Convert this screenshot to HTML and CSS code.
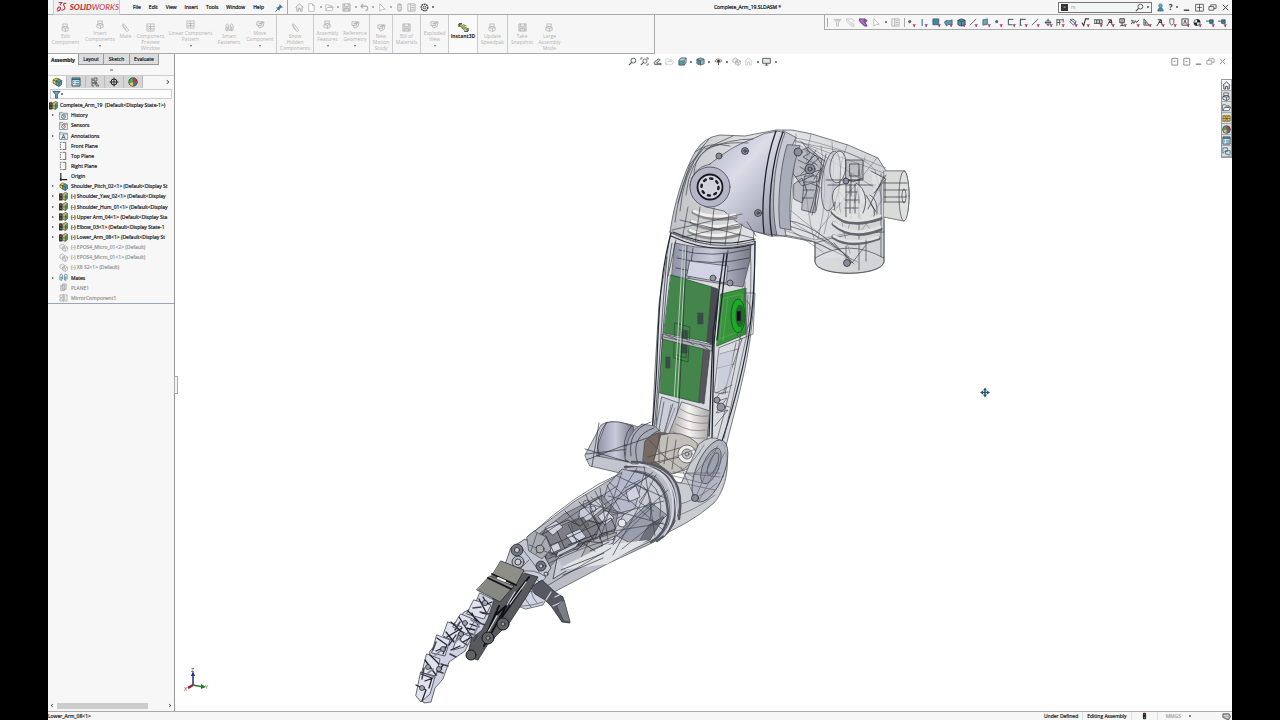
FILE: index.html
```html
<!DOCTYPE html>
<html lang="en">
<head>
<meta charset="utf-8">
<title>Complete_Arm_19.SLDASM</title>
<link rel="stylesheet" href="styles.css">
</head>
<body>
<svg class="defs" aria-hidden="true">
  <symbol id="part" viewBox="0 0 10 10"><path d="M1 3l3-2 3 1v4L4 8 1 6z" fill="#e0c73c" stroke="#665d22" stroke-width=".7"/><path d="M4 4l3-2 2.500 1.500v4L7 9.500 4 8z" fill="#58a0a8" stroke="#1e4a50" stroke-width=".7"/><path d="M4 4l3 1.500 2.500-2M7 5.500v4M1 3l3 1" fill="none" stroke="#333" stroke-width=".6"/></symbol>
  <symbol id="flex" viewBox="0 0 10 10"><rect x="0" y="1.500" width="4" height="8" rx="1" fill="#3a3030"/><circle cx="2" cy="3.500" r="1" fill="#a34b3a"/><circle cx="2" cy="7" r="1" fill="#567a3a"/><path d="M4 2.500l3-2 2.500 1v6L7 9.500 4 8z" fill="#d8c240" stroke="#27464c" stroke-width=".7"/><path d="M7 3l2.500-1.500v6L7 9.500z" fill="#4b949e"/><path d="M4 5.500h5.500M7 3v6" stroke="#27464c" stroke-width=".6"/></symbol>
  <symbol id="ghost" viewBox="0 0 10 10"><path d="M1 2.500l3-1.500 2 1.500v3L4 7 1 5.500zM4 4.500l3-1.500 2.500 1.500v3L7 9.500 4 8z" fill="#eee" stroke="#aaa" stroke-width=".8"/><path d="M4 4.500l3 1.500 2.500-1.500M7 6v3.500" fill="none" stroke="#aaa" stroke-width=".7"/></symbol>
  <symbol id="folder" viewBox="0 0 10 10"><path d="M.7 1.500h3l1 1h4.600v7H.7z" fill="#f8f8f8" stroke="#6a7880" stroke-width=".8"/><path d="M.7 3.500h8.600" stroke="#6a7880" stroke-width=".6"/></symbol>
  <symbol id="history" viewBox="0 0 10 10"><use href="#folder"/><circle cx="5" cy="6.200" r="2.200" fill="#cde" stroke="#35617d" stroke-width=".8"/><path d="M5 5v1.300h1.200" fill="none" stroke="#35617d" stroke-width=".7"/></symbol>
  <symbol id="sensor" viewBox="0 0 10 10"><use href="#folder"/><circle cx="5" cy="6.200" r="2" fill="none" stroke="#444" stroke-width=".8"/><path d="M5 6.200l2-2" stroke="#b33" stroke-width=".9"/></symbol>
  <symbol id="annot" viewBox="0 0 10 10"><use href="#folder"/><path d="M3 9l2-5 2 5M3.700 7.300h2.600" fill="none" stroke="#23567a" stroke-width=".9"/></symbol>
  <symbol id="plane" viewBox="0 0 10 10"><path d="M4 1.500h3.500v8H4" fill="none" stroke="#555" stroke-width=".9"/><path d="M3 1.500H1.500v8H4" fill="none" stroke="#555" stroke-width=".9" stroke-dasharray="2 1"/></symbol>
  <symbol id="origin" viewBox="0 0 10 10"><path d="M2 1v7.500h7" fill="none" stroke="#222" stroke-width="1.300"/><circle cx="2" cy="8.500" r="1.200" fill="#222"/></symbol>
  <symbol id="mates" viewBox="0 0 10 10"><path d="M1 8V3.500C1 .5 4 .5 4 3.500V7M6 8V3.500C6 .5 9 .5 9 3.500V7M2.500 4v5M7.500 4v5" fill="none" stroke="#5d8ea6" stroke-width="1.100"/></symbol>
  <symbol id="gmates" viewBox="0 0 10 10"><path d="M1 8V3.500C1 .5 4 .5 4 3.500V7M6 8V3.500C6 .5 9 .5 9 3.500V7M1 8h8M2.500 4v5M7.500 4v5" fill="none" stroke="currentColor" stroke-width="1"/></symbol>
  <symbol id="gplane" viewBox="0 0 10 10"><path d="M2 2.500h4v6H2zM4 1h4v6H4z" fill="#ddd" stroke="#999" stroke-width=".7"/></symbol>
  <symbol id="mirror" viewBox="0 0 10 10"><path d="M1 2h3v3H1zM1 6.500h3V9H1zM6 2h3v7H6zM5 1v9" fill="#eee" stroke="#aaa" stroke-width=".8"/></symbol>
  <symbol id="prop" viewBox="0 0 10 10"><path d="M1 1h8v8H1z" fill="#e8f2f6" stroke="#28434e" stroke-width=".9"/><path d="M1 2.300h8" stroke="#2c6984" stroke-width="1.800"/><path d="M2 4.700h1.500M2 6.500h1.500M4.500 4.700h4M4.500 6.500h4M4.500 8h4" stroke="#39839d" stroke-width=".9"/></symbol>
  <symbol id="config" viewBox="0 0 10 10"><path d="M2 1v8h2M2 3h2M2 6h2" fill="none" stroke="#444" stroke-width=".8"/><path d="M4 1h3v3H4zM4 5h2v2H4zM6 5l3 4H6z" fill="#ccc" stroke="#444" stroke-width=".7"/></symbol>
  <symbol id="target" viewBox="0 0 10 10"><circle cx="5" cy="5" r="3" fill="none" stroke="#222"/><path d="M5 .5v9M.5 5h9" stroke="#222" stroke-width=".9"/></symbol>
  <symbol id="ball" viewBox="0 0 10 10"><circle cx="5" cy="5" r="4.300" fill="#3b78b5"/><path d="M5 5V.7A4.300 4.300 0 0 0 .9 6z" fill="#4ca553"/><path d="M5 5V.7A4.300 4.300 0 0 1 9.200 6z" fill="#c6373b"/><path d="M5 5L1 6.500A4.300 4.300 0 0 0 5 9.300z" fill="#e5cf4a"/><circle cx="5" cy="5" r="4.300" fill="none" stroke="#333" stroke-width=".6"/></symbol>
  <symbol id="home" viewBox="0 0 10 10"><path d="M.7 5L5 1l4.300 4M2 4.500V9h2V6h2v3h2V4.500" fill="#edf3f5" stroke="currentColor" stroke-width="1"/></symbol>
  <symbol id="new" viewBox="0 0 10 10"><path d="M2 .8h4l2 2v6.500H2zM6 .8v2h2" fill="#fff" stroke="currentColor" stroke-width=".8"/></symbol>
  <symbol id="open" viewBox="0 0 10 10"><path d="M.8 8.500V2h3l1 1.200h3v1.500H3L.8 8.500h6.700l2-3.800H3" fill="#fff" stroke="currentColor" stroke-width=".8"/></symbol>
  <symbol id="save" viewBox="0 0 10 10"><path d="M1 1h8v8H1zM3 1v3h4V1M2.500 9V6h5v3" fill="#ddd" stroke="currentColor" stroke-width=".9"/></symbol>
  <symbol id="undo" viewBox="0 0 10 10"><path d="M3.500 1L1 3.500 3.500 6M1 3.500h5c4 0 3 5 0 5" fill="none" stroke="currentColor" stroke-width="1.200"/></symbol>
  <symbol id="cursor" viewBox="0 0 10 10"><path d="M2 1l6 6H5L2 9z" fill="#fff" stroke="currentColor" stroke-width=".8"/></symbol>
  <symbol id="light" viewBox="0 0 10 10"><rect x="3" y="1" width="4" height="8" rx="1.500" fill="currentColor"/><circle cx="5" cy="3" r="1" fill="#b33"/><circle cx="5" cy="7" r="1" fill="#5a5"/></symbol>
  <symbol id="glight" viewBox="0 0 10 10"><rect x="3" y="1" width="4" height="8" rx="1.500" fill="#ccc" stroke="#aaa"/><path d="M3 4h4M3 6.500h4" stroke="#eee"/></symbol>
  <symbol id="list" viewBox="0 0 10 10"><path d="M1 1h8v8H1zM4 1v8M5 3h3M5 5h3M5 7h3" fill="none" stroke="currentColor" stroke-width=".9"/></symbol>
  <symbol id="gear" viewBox="0 0 10 10"><circle cx="5" cy="5" r="3.700" fill="none" stroke="#444" stroke-width="1.500" stroke-dasharray="2 .7"/><circle cx="5" cy="5" r="1.500" fill="none" stroke="#444"/></symbol>
  <symbol id="asm" viewBox="0 0 10 10"><path d="M2 1h5v3H2zM1 5l4-1 3 1v3L5 9.500 1 8zM1 5l4 1 3-1M5 6v3.500" fill="#eee" stroke="currentColor" stroke-width=".8"/></symbol>
  <symbol id="clip" viewBox="0 0 10 10"><path d="M3 1c-2 0-2 2-1 3l4 5c2 1 3-1 2-2L4 2C3 1 2 3 3 4l3 4" fill="none" stroke="currentColor" stroke-width=".9"/></symbol>
  <symbol id="grid" viewBox="0 0 10 10"><path d="M1 1h8v8H1zM1 4h8M5 1v8M1 6.500h8M3 3l4 4M7 3L3 7" fill="none" stroke="currentColor" stroke-width=".8"/></symbol>
  <symbol id="move" viewBox="0 0 10 10"><path d="M1 2h5v4H1zM4 4l5-2-1 5-4 2-2-3M7 1v3H3" fill="#eee" stroke="currentColor" stroke-width=".9"/></symbol>
  <symbol id="i3d" viewBox="0 0 14 12"><path d="M1 3.500l2-1.500 9 5-1 2z" fill="#d9d54c" stroke="#28451e" stroke-width=".8"/><path d="M1 1h4M1 1v4M13 11H8M13 11V7" stroke="#222" stroke-width="1.500"/><path d="M4 6l5 4M6 2l5 2" stroke="#4c8a3b" stroke-width="1.300"/></symbol>
  <symbol id="funnel" viewBox="0 0 10 10"><path d="M1 1.500h8L6 5v4H4V5z" fill="#7ba8bd" stroke="currentColor" stroke-width=".9"/></symbol>
  <symbol id="gfunnel" viewBox="0 0 10 10"><path d="M1 1.500h8L6 5v4H4V5zM3 3h5" fill="#eee" stroke="#bbb" stroke-width=".9"/></symbol>
  <symbol id="pfunnel" viewBox="0 0 10 10"><path d="M0 1h7l2 2-2 2 2 4H6L1 4z" fill="#9050b0" stroke="#573069" stroke-width=".8"/><path d="M2 2l5 6M5 1l-3 3" stroke="#ddb8e8" stroke-width=".7"/></symbol>
  <symbol id="wfunnel" viewBox="0 0 10 10"><path d="M0 1h7l2 2-2 2 2 4H6L1 4zM2 2l5 6" fill="#f4f4f4" stroke="#bbb" stroke-width=".8"/></symbol>
  <symbol id="tip" viewBox="0 0 10 10"><path d="M6 7h4L8.700 8.500V10H7.300V8.500z" fill="#a83f75"/></symbol>
  <symbol id="cube" viewBox="0 0 10 10"><path d="M1 2.500L5 1l4 1.500v5L5 9 1 7.500z" fill="#8fb9c4" stroke="#3b5058" stroke-width=".8"/><path d="M1 2.500L5 4v5L1 7.500z" fill="#4d8797"/><path d="M1 2.500L5 4l4-1.500M5 4v5" stroke="#3b5058" stroke-width=".7" fill="none"/></symbol>
  <symbol id="section" viewBox="0 0 10 10"><path d="M1 4h6v5H1z" fill="#5b97a6" stroke="#2e4a54" stroke-width=".8"/><path d="M1 4l2-3h6L7 4M9 1v5L7 9" fill="#b5d0d7" stroke="#2e4a54" stroke-width=".8"/></symbol>
  <symbol id="f-point" viewBox="0 0 10 10"><circle cx="3" cy="4" r="1.300" fill="#267083" stroke="#333" stroke-width=".6"/><use href="#tip"/></symbol>
  <symbol id="f-edge" viewBox="0 0 10 10"><path d="M3.500 1v8" stroke="#287b91" stroke-width="1.200"/><use href="#tip"/></symbol>
  <symbol id="f-face" viewBox="0 0 10 10"><path d="M1 1h6.500v6.500H1z" fill="#49879b" stroke="#275362" stroke-width=".8"/><use href="#tip"/></symbol>
  <symbol id="f-surf" viewBox="0 0 10 10"><path d="M.5 5C3 0 5 5 9 2v5C6 8 4 6 3 9z" fill="#5898aa" stroke="#275362" stroke-width=".8"/><use href="#tip"/></symbol>
  <symbol id="f-cube" viewBox="0 0 10 10"><path d="M1 2.500L5 1l4 1.500v5L5 9 1 7.500z" fill="#5595a9" stroke="#263f4b" stroke-width=".9"/><path d="M1 2.500L5 4l4-1.500M5 4v5" stroke="#263f4b" stroke-width=".8" fill="none"/><use href="#tip"/></symbol>
  <symbol id="f-axis" viewBox="0 0 10 10"><path d="M1 8l7-7" stroke="#555"/><use href="#tip"/></symbol>
  <symbol id="f-plane" viewBox="0 0 10 10"><path d="M1 2l5-1v6l-5 1z" fill="#6fa3b2" stroke="#356070" stroke-width=".8"/><use href="#tip"/></symbol>
  <symbol id="f-line" viewBox="0 0 10 10"><path d="M1.500 8V1.500h6" fill="none" stroke="#333"/><path d="M.5 8h3M2 .5v2" stroke="#287b91"/><use href="#tip"/></symbol>
  <symbol id="f-sketch" viewBox="0 0 10 10"><path d="M7 1.500H1.500v6H6" fill="none" stroke="#3a555d" stroke-width="1.100"/><use href="#tip"/></symbol>
  <symbol id="f-mid" viewBox="0 0 10 10"><path d="M1 5l3.500-3L8 5 4.500 8zM1 5h7M4.500 1v8" fill="none" stroke="#345" stroke-width=".9"/><use href="#tip"/></symbol>
  <symbol id="f-dim" viewBox="0 0 10 10"><path d="M1 1v8M8 1v4M1 2h7M1 5h4M4 2v6" fill="none" stroke="#444" stroke-width=".9"/><use href="#tip"/></symbol>
  <symbol id="f-diam" viewBox="0 0 10 10"><path d="M1 4l3-3 4 3-3 4zM1 1l7 6" fill="none" stroke="#345" stroke-width=".9"/><use href="#tip"/></symbol>
  <symbol id="f-check" viewBox="0 0 10 10"><path d="M1 5l2 3.500L5 1h4" fill="none" stroke="#333" stroke-width="1.200"/><use href="#tip"/></symbol>
  <symbol id="f-box" viewBox="0 0 10 10"><path d="M0 2h9v4H0zM3 2v4M6 2v4" fill="#ddd" stroke="#333" stroke-width=".9"/><use href="#tip"/></symbol>
  <symbol id="f-note" viewBox="0 0 10 10"><path d="M1 9l4-7 2 6M3 5h4M2 2h4v3" fill="none" stroke="#333" stroke-width="1"/><use href="#tip"/></symbol>
  <symbol id="f-datum" viewBox="0 0 10 10"><path d="M2 .8h5v4.500H2zM4.500 5.500v3M2.500 8.500h4M4.500 2v2" fill="#ddd" stroke="#333" stroke-width="1"/><use href="#tip"/></symbol>
  <symbol id="f-weld" viewBox="0 0 10 10"><path d="M0 7l2-3 1 2 2-3 1 2 3-3M0 3h3" fill="none" stroke="#333" stroke-width="1"/><use href="#tip"/></symbol>
  <symbol id="f-tri" viewBox="0 0 10 10"><path d="M1 1v7h6zM3 4v3" fill="#ccc" stroke="#444" stroke-width=".9"/><use href="#tip"/></symbol>
  <symbol id="f-slot" viewBox="0 0 10 10"><path d="M2 1h4.500v5l-2.200 2L2 6z" fill="#eee" stroke="#555" stroke-width=".9"/><use href="#tip"/></symbol>
  <symbol id="f-frame" viewBox="0 0 10 10"><path d="M1 1h7v7H1zM3 6.500L4.500 2.500 6 6.500" fill="#eee" stroke="#333" stroke-width=".9"/><use href="#tip"/></symbol>
  <symbol id="f-mass" viewBox="0 0 10 10"><circle cx="4.500" cy="5" r="3.500" fill="#eee" stroke="#222" stroke-width=".7"/><path d="M4.500 5V1.500A3.500 3.500 0 0 1 8 5zM4.500 5v3.500A3.500 3.500 0 0 1 1 5z" fill="#222"/><use href="#tip"/></symbol>
  <symbol id="f-pin" viewBox="0 0 10 10"><path d="M0 3.500h4" stroke="#444"/><path d="M4 2h4v4H4z" fill="#3b8394" stroke="#234" stroke-width=".7"/><use href="#tip"/></symbol>
  <symbol id="mag" viewBox="0 0 10 10"><circle cx="6" cy="4" r="2.700" fill="#eef5f8" stroke="currentColor" stroke-width="1"/><path d="M4 6L1 9" stroke="currentColor" stroke-width="1.400"/></symbol>
  <symbol id="magarea" viewBox="0 0 10 10"><path d="M1 3V1h2M7 1h2v2M7 9h2V7" fill="none" stroke="currentColor" stroke-width=".9"/><circle cx="5.500" cy="4.500" r="2.300" fill="#fff" stroke="currentColor" stroke-width=".9"/><path d="M4 6L1 9" stroke="currentColor" stroke-width="1.200"/></symbol>
  <symbol id="prev" viewBox="0 0 10 10"><path d="M1 6l5-4 2 1-4 4h5v1.500H2z" fill="#c5d8df" stroke="currentColor" stroke-width=".9"/></symbol>
  <symbol id="eye" viewBox="0 0 10 10"><path d="M1 4.500c2-3 6-3 8 0-2 2-6 2-8 0z" fill="#ddd" stroke="#555" stroke-width=".7"/><circle cx="5" cy="4.500" r="1.500" fill="#333"/><path d="M5 6v3" stroke="#444"/></symbol>
  <symbol id="screen" viewBox="0 0 10 10"><path d="M.7 1.500h8.600v5.500H.7z" fill="#dce7e9" stroke="currentColor"/><path d="M5 7v2M3 9h4" stroke="currentColor"/></symbol>
  <symbol id="user" viewBox="0 0 10 10"><circle cx="5" cy="3" r="2" fill="#75a8bc" stroke="#2b6277" stroke-width=".7"/><path d="M2 9c0-5 6-5 6 0z" fill="#488ba4" stroke="#2b6277" stroke-width=".7"/></symbol>
  <symbol id="min" viewBox="0 0 10 10"><path d="M2 8h6" stroke="currentColor" stroke-width="1.500"/></symbol>
  <symbol id="span" viewBox="0 0 10 10"><path d="M.7 1.500h8.600v7.500H.7zM5 1.500V9M2.500 5h5" fill="none" stroke="currentColor" stroke-width=".8"/></symbol>
  <symbol id="rest" viewBox="0 0 10 10"><path d="M1 4h5.500v4H1zM3 4V2h6v4H6.500" fill="none" stroke="currentColor" stroke-width=".8"/></symbol>
  <symbol id="close" viewBox="0 0 10 10"><path d="M2 2l6 6M8 2L2 8" stroke="currentColor" stroke-width="1"/></symbol>
  <symbol id="dockl" viewBox="0 0 10 10"><path d="M2 1.500h6.500v7.500H2zM4 5h2" fill="none" stroke="currentColor" stroke-width="1"/></symbol>
  <symbol id="tools" viewBox="0 0 10 10"><path d="M1 2h8v6H1z" fill="#e1c33d" stroke="#555" stroke-width=".8"/><path d="M1 5h8M3 2l4 6M7 2L3 8" stroke="#6a532c" stroke-width=".8"/></symbol>
  <symbol id="chat" viewBox="0 0 10 10"><path d="M1 1h5v4H3L1 7zM4 4h5v4l-1 1.500L7 8H4z" fill="#d7e8ed" stroke="#376d82" stroke-width=".9"/></symbol>
  <symbol id="tag" viewBox="0 0 10 10"><path d="M1 2h7l1.500 3L7 9 1 6z" fill="#aaa" stroke="#555" stroke-width=".9"/><path d="M2 4h5M4 6h3" stroke="#eee" stroke-width=".8"/></symbol>
  <symbol id="pin" viewBox="0 0 10 10"><path d="M5 1l4 4-2 0-2 2 0 2-4-4 2 0 2-2z" fill="#347891"/><path d="M3 7L.5 9.500" stroke="#345"/></symbol>
</svg>

<div class="app">
  <header class="titlebar">
    <div class="brand">
      <svg class="ds" viewBox="0 0 12 12"><path d="M3 1h3.500L4.500 4M1 10.500c4 .5 6-5 2-4.500L1 9M11.500 2C8 1 8 4 9.500 5.500S9.500 10 6 9.500" fill="none" stroke="#c5253b" stroke-width="1.200"/></svg>
      <span class="brand-name"><b>SOLID</b>WORKS</span>
    </div>
    <nav class="menu">
      <button>File</button><button>Edit</button><button>View</button><button>Insert</button><button>Tools</button><button>Window</button><button>Help</button>
    </nav>
    <svg class="ic pin"><use href="#pin"/></svg>
    <div class="quick">
      <svg class="ic"><use href="#home"/></svg><svg class="ic"><use href="#new"/></svg><i class="dot"></i><svg class="ic"><use href="#open"/></svg><i class="dot"></i><svg class="ic"><use href="#save"/></svg><i class="dot"></i><svg class="ic"><use href="#undo"/></svg><i class="dot"></i><svg class="ic"><use href="#cursor"/></svg><i class="dot"></i><svg class="ic"><use href="#glight"/></svg><svg class="ic"><use href="#list"/></svg><svg class="ic"><use href="#gear"/></svg><i class="dot dark"></i>
    </div>
    <h1 class="doc">Complete_Arm_19.SLDASM *</h1>
    <div class="wintools">
      <label class="search"><span class="prompt">&gt;</span><input type="text" value="rx" aria-label="Search commands"><svg class="ic"><use href="#mag"/></svg><i class="dot dark"></i></label>
      <svg class="ic"><use href="#user"/></svg><button class="help" aria-label="Help">?</button><i class="dot dark"></i>
      <button aria-label="Minimize"><svg class="ic"><use href="#min"/></svg></button><button aria-label="Span displays"><svg class="ic"><use href="#span"/></svg></button><button aria-label="Restore"><svg class="ic"><use href="#rest"/></svg></button><button aria-label="Close"><svg class="ic"><use href="#close"/></svg></button>
    </div>
  </header>

  <div class="toolrow">
    <div class="ribbon">
      <button><svg class="ic"><use href="#asm"/></svg>Edit<br>Component</button>
      <button class="drop"><svg class="ic"><use href="#asm"/></svg>Insert<br>Components</button>
      <button><svg class="ic"><use href="#clip"/></svg>Mate</button>
      <button><svg class="ic"><use href="#grid"/></svg>Component<br>Preview<br>Window</button>
      <button class="drop"><svg class="ic"><use href="#grid"/></svg>Linear Component<br>Pattern</button>
      <button><svg class="ic"><use href="#gmates"/></svg>Smart<br>Fasteners</button>
      <button class="drop"><svg class="ic"><use href="#move"/></svg>Move<br>Component</button>
      <button class="line"><svg class="ic"><use href="#clip"/></svg>Show<br>Hidden<br>Components</button>
      <button class="drop line"><svg class="ic"><use href="#asm"/></svg>Assembly<br>Features</button>
      <button class="drop"><svg class="ic"><use href="#move"/></svg>Reference<br>Geometry</button>
      <button class="line"><svg class="ic"><use href="#move"/></svg>New<br>Motion<br>Study</button>
      <button class="line"><svg class="ic"><use href="#save"/></svg>Bill of<br>Materials</button>
      <button class="drop line"><svg class="ic"><use href="#move"/></svg>Exploded<br>View</button>
      <button class="line on"><svg class="ic"><use href="#i3d"/></svg>Instant3D</button>
      <button class="line"><svg class="ic"><use href="#asm"/></svg>Update<br>Speedpak</button>
      <button class="line"><svg class="ic"><use href="#save"/></svg>Take<br>Snapshot</button>
      <button><svg class="ic"><use href="#asm"/></svg>Large<br>Assembly<br>Mode</button>
    </div>
    <div class="filters">
      <div class="filters-a"><svg class="ic"><use href="#gfunnel"/></svg><svg class="ic"><use href="#wfunnel"/></svg><svg class="ic"><use href="#pfunnel"/></svg><svg class="ic"><use href="#cursor"/></svg><i class="dot dark"></i><svg class="ic"><use href="#list"/></svg></div>
      <div class="filters-b"><svg class="ic"><use href="#f-point"/></svg><svg class="ic"><use href="#f-edge"/></svg><svg class="ic"><use href="#f-face"/></svg><svg class="ic"><use href="#f-surf"/></svg><svg class="ic"><use href="#f-cube"/></svg><svg class="ic"><use href="#f-axis"/></svg><svg class="ic"><use href="#f-plane"/></svg><svg class="ic"><use href="#f-point"/></svg><svg class="ic"><use href="#f-sketch"/></svg><svg class="ic"><use href="#f-line"/></svg><svg class="ic"><use href="#f-axis"/></svg><svg class="ic"><use href="#f-mid"/></svg><svg class="ic"><use href="#f-dim"/></svg><svg class="ic"><use href="#f-diam"/></svg><svg class="ic"><use href="#f-check"/></svg><svg class="ic"><use href="#f-box"/></svg><svg class="ic"><use href="#f-note"/></svg><svg class="ic"><use href="#f-datum"/></svg><svg class="ic"><use href="#f-weld"/></svg><svg class="ic"><use href="#f-tri"/></svg><svg class="ic"><use href="#f-note"/></svg><svg class="ic"><use href="#f-slot"/></svg><svg class="ic"><use href="#f-frame"/></svg><svg class="ic"><use href="#f-mass"/></svg><svg class="ic"><use href="#f-pin"/></svg><svg class="ic"><use href="#f-pin"/></svg></div>
    </div>
  </div>

  <main class="work">
    <aside class="side">
      <div class="tabs"><button class="on">Assembly</button><button>Layout</button><button>Sketch</button><button>Evaluate</button></div>
      <div class="grip"></div>
      <div class="panes"><button class="on" aria-label="Feature tree"><svg class="ic"><use href="#part"/></svg></button><button aria-label="Properties"><svg class="ic"><use href="#prop"/></svg></button><button aria-label="Configurations"><svg class="ic"><use href="#config"/></svg></button><button aria-label="Dimensions"><svg class="ic"><use href="#target"/></svg></button><button aria-label="Display"><svg class="ic"><use href="#ball"/></svg></button><span class="more"></span></div>
      <label class="filter"><svg class="ic"><use href="#funnel"/></svg><i class="dot dark"></i><input type="text" aria-label="Filter tree"></label>
      <ul class="tree">
        <li class="root"><svg class="ic"><use href="#flex"/></svg>Complete_Arm_19&nbsp; (Default&lt;Display State-1&gt;)</li>
        <li class="exp"><svg class="ic"><use href="#history"/></svg>History</li>
        <li><svg class="ic"><use href="#sensor"/></svg>Sensors</li>
        <li class="exp"><svg class="ic"><use href="#annot"/></svg>Annotations</li>
        <li><svg class="ic"><use href="#plane"/></svg>Front Plane</li>
        <li><svg class="ic"><use href="#plane"/></svg>Top Plane</li>
        <li><svg class="ic"><use href="#plane"/></svg>Right Plane</li>
        <li><svg class="ic"><use href="#origin"/></svg>Origin</li>
        <li class="exp"><svg class="ic"><use href="#part"/></svg>Shoulder_Pitch_02&lt;1&gt; (Default&lt;Display St</li>
        <li class="exp"><svg class="ic"><use href="#flex"/></svg>(-) Shoulder_Yaw_02&lt;1&gt; (Default&lt;Display</li>
        <li class="exp"><svg class="ic"><use href="#flex"/></svg>(-) Shoulder_Hum_01&lt;1&gt; (Default&lt;Display</li>
        <li class="exp"><svg class="ic"><use href="#flex"/></svg>(-) Upper Arm_04&lt;1&gt; (Default&lt;Display Sta</li>
        <li class="exp"><svg class="ic"><use href="#flex"/></svg>(-) Elbow_03&lt;1&gt; (Default&lt;Display State-1</li>
        <li class="exp"><svg class="ic"><use href="#flex"/></svg>(-) Lower_Arm_08&lt;1&gt; (Default&lt;Display St</li>
        <li class="off"><svg class="ic"><use href="#ghost"/></svg>(-) EPOS4_Micro_01&lt;2&gt; (Default)</li>
        <li class="off"><svg class="ic"><use href="#ghost"/></svg>(-) EPOS4_Micro_01&lt;1&gt; (Default)</li>
        <li class="off"><svg class="ic"><use href="#ghost"/></svg>(-) X8 S2&lt;1&gt; (Default)</li>
        <li class="exp"><svg class="ic"><use href="#mates"/></svg>Mates</li>
        <li class="off"><svg class="ic"><use href="#gplane"/></svg>PLANE1</li>
        <li class="off"><svg class="ic"><use href="#mirror"/></svg>MirrorComponent1</li>
      </ul>
      <div class="hscroll"><span class="chev left"></span><span class="track"><span class="thumb"></span></span><span class="chev"></span></div>
      <span class="collapse"></span>
    </aside>

    <section class="view">
      <svg class="scene" viewBox="175 54 1057 657" preserveAspectRatio="xMidYMid meet" role="img" aria-label="Robotic arm assembly">
        <defs>
          <linearGradient id="lav" x1="0" x2="1" y2="1"><stop offset="0" stop-color="#9fa1b5"/><stop offset=".45" stop-color="#dcdde9"/><stop offset="1" stop-color="#8b8d9f"/></linearGradient>
          <linearGradient id="glass" x1="0" x2="1"><stop offset="0" stop-color="#bfc2c6"/><stop offset=".4" stop-color="#e6e7ea"/><stop offset="1" stop-color="#cdd0d3"/></linearGradient>
          <linearGradient id="steel" x1="0" x2="1"><stop offset="0" stop-color="#9c9896"/><stop offset=".5" stop-color="#f6f5f2"/><stop offset="1" stop-color="#a8a6a5"/></linearGradient>
          <linearGradient id="cyl" x1="0" x2="1"><stop offset="0" stop-color="#8f91a6"/><stop offset=".5" stop-color="#c9cadb"/><stop offset="1" stop-color="#777a88"/></linearGradient>
        </defs>
        <g stroke-linejoin="round" stroke-linecap="round" stroke="#44464e" stroke-width=".7" fill="none">
          <!-- shoulder housing -->
          <path d="M670 232C674 204 683 174 695 152Q704 137 720 135L745 136 776 130 792 130 812 134 848 145 878 158 886 171 905 171Q909 180 909 195 909 214 904 221L884 217V262C881 277 817 277 815 262V242L783 236 770 236 754 231 753 245Q715 252 670 232z" fill="url(#glass)"/>
          <path d="M884 171L905 171Q909 180 909 195 909 214 904 221L884 217z" fill="#d9dbd9" stroke="#777"/>
          <ellipse cx="904" cy="196" rx="5" ry="25" fill="#e0e1df"/><ellipse cx="904" cy="196" rx="2" ry="7"/>
          <path d="M815 242V262C817 277 881 277 884 262V220M815 258Q848 238 884 258M815 243Q848 232 884 232M881 174V257M859 170V270" fill="#cfd1d055"/>
          <path d="M787 137C806 138 862 153 875 170L882 200 862 230 815 240 780 229zM796 134L790 230M811 134Q799 180 814 239M847 145Q829 190 850 253M786 137L884 173M800 141L880 191M790 210L852 260M792 222L840 251M801 146L870 229M877 158L814 236M865 157L848 230M821 146Q830 193 818 239M832 142Q838 182 824 234M792 141L846 152 886 168M794 233L858 262M789 229L823 252" stroke="#666972" stroke-width=".5"/>
          <ellipse cx="831" cy="181" rx="9" ry="30" transform="rotate(7 831 181)" fill="#c5c7cf99"/><ellipse cx="838" cy="167" rx="8" ry="16" transform="rotate(7 838 167)" fill="#edeef166"/>
          <path d="M795 154l13-7 14 12-3 22-17 5-10-14zM794 184l8-6 5 13-5 12-8-4zM805 176h12l-2 37-13-3zM804 182h10M803 190h11M802 198h11" fill="#8d909d77" stroke="#3e4149"/>
          <path d="M802 142l8 11-7 4 14 8M798 160l8 4 9-9 8 11-9 13M806 150l19 11M800 167l14 8-15 7M816 150l-9 15M819 158l-18 16M795 177l25-7M822 168l-12 45M826 154l-14 61M812 184l8 3-4 24" stroke="#3c3f48"/>
          <path d="M846 160h17v20h-17zM850 164h9v12h-9zM826 180h34M828 185h48M851 174v22M844 178l9 4 10-4M884 183h23M884 190h23M884 197h22M884 202h21M885 180v22" stroke="#30333a" fill="#88898d55"/>
          <path d="M834 206C829 190 837 184 846 184V217M856 183C866 188 868 203 863 213M835 202Q832 218 845 223H867Q880 216 871 204M850 184v29M855 184v29M846 192h11M845 200h13M845 208h13M877 190l9-15M868 209l16-33M876 212l-10-17M871 171l15 8-12 14M870 195q8 4 7 19" fill="#e5e5e3aa" stroke-width=".8"/>
          <g fill="none" stroke="#63676c" stroke-width="5"><path d="M833 212Q847 229 880 218M834 224Q852 240 880 229M834 237Q850 248 878 238"/></g><g stroke="#e2e2e0" stroke-width="3"><path d="M833 211Q847 227 880 216M834 223Q852 238 880 227M834 236Q850 246 878 237"/></g>
          <path d="M780 220Q812 219 854 264M775 224Q812 227 849 257M784 235Q816 240 831 250M846 246v15M866 240v21M834 243l18 20 14-18" stroke="#464950"/>
          <path d="M783 131C774 157 770 204 774 235L786 236C780 207 785 155 796 138z" fill="#c7c9d3"/>
          <path d="M787 145C780 167 777 206 780 228L791 230C788 203 792 164 800 146z" fill="#a9acb9"/>
          <!-- bracket -->
          <path d="M710 164Q730 147 752 139 764 132 778 131L785 133C774 160 770 207 777 235L765 234Q744 231 724 211L706 207Q690 199 690 185 692 168 710 164z" fill="url(#lav)"/>
          <path d="M776 131C764 163 761 209 764 233M783 132C771 162 767 209 772 236" stroke="#22242b" stroke-width="1.300"/>
          <path d="M694 176C694 150 713 141 748 143M695 152Q708 141 730 146M680 211Q683 174 702 149M675 222Q681 170 709 139M705 149Q730 139 753 139M686 195Q689 161 711 146L733 136M678 203l12-39 15-17" />
          <circle cx="710" cy="187" r="20" fill="#b4b6c8" stroke="#33353d"/><circle cx="710" cy="187" r="12.500" fill="#d3d3df" stroke="#17191e" stroke-width="1.800"/><circle cx="710" cy="187" r="8.500" stroke="#1c1e24" stroke-width="2.500" stroke-dasharray="2 4.680"/>
          <g fill="#8a8d99" stroke="#22252c"><circle cx="745" cy="151" r="3.500"/><circle cx="745" cy="151" r="1.300"/><circle cx="758" cy="213" r="3.500"/><circle cx="758" cy="213" r="1.300"/><circle cx="810" cy="169" r="5"/><circle cx="810" cy="169" r="2"/><circle cx="798" cy="152" r="4"/><circle cx="846" cy="181" r="3"/><circle cx="847" cy="263" r="3.500"/><circle cx="719" cy="156" r="3"/></g>
          <!-- shoulder bearing -->
          <g stroke="#8d8c8b" stroke-width="5"><path d="M694 212Q708 221 735 217M692 222Q710 232 738 226M690 231Q711 242 738 234"/></g><g stroke="#f2f0ed" stroke-width="3"><path d="M694 211Q708 219 735 215M692 221Q710 230 738 224M690 230Q711 240 738 232"/></g>
          <path d="M688 207l-6 33M700 207l-5 38M714 208l-4 40M729 214l-4 31M742 224l-5 23M680 220l73 18M672 230l70-16M675 239l64-15M756 236l-9-14"/>
          <!-- upper arm shell -->
          <path d="M671 233Q713 253 755 241L754 294C752 350 741 386 726 446L710 465 652 437 655 370 659 304z" fill="#d0d2dacc"/>
          <path d="M675 243Q714 253 751 244L750 260 743 287 672 276z" fill="url(#cyl)"/><path d="M679 250Q711 259 750 249M677 258Q711 267 749 258M676 268Q708 277 746 268M693 248l-4 30M728 250l-4 32" stroke="#33353d"/><path d="M690 261l38 5-2 17-39-7z" fill="#d3d4e3"/>
          <path d="M671 236Q713 256 754 244M673 232Q713 250 755 239" stroke="#2c2f36" stroke-width="1.100"/>
          <path d="M671 275L712 287 708 342 664 333z" fill="#43854a" stroke="#234b2b"/><path d="M712 287l6 2-5 56-6-3z" fill="#484b52"/>
          <path d="M663 339L704 348 700 403 660 393z" fill="#43854a" stroke="#234b2b"/><path d="M704 348l6 3-6 53-5-2z" fill="#55575d"/>
          <path d="M721 294L746 288 746 334 717 346z" fill="#36953b" stroke="#225c29"/><path d="M724 298l18-4-2 37-20 8zM728 297l-5 44" stroke="#67a46c"/>
          <ellipse cx="738" cy="316" rx="7" ry="17" fill="#1eaa28" stroke="#064c10"/><ellipse cx="740" cy="316" rx="4" ry="11" fill="#0a7a16"/><path d="M737 311h4v10h-4z" fill="#101418"/><path d="M744 293h11l-2 41-12 5-4-4M745 300q7 2 6 17-1 12-9 16M748 295l-2 40" stroke="#50535a"/>
          <path d="M698 313h5v11h-5zM666 357h4v11h-4zM681 331h6v22h-6z" fill="#335041"/>
          <path d="M675 323l15 4-2 35-14-4zM679 329l9 2-2 27-9-3" stroke="#284733"/>
          <path d="M663 334l50 11-1 6-50-12z" fill="#b2b5b8"/><path d="M664 337l48 10M687 341l7 4M666 335l12 5M700 344l9 6"/>
          <path d="M686 246L677 403M683 247L674 401" stroke="#c2d8c3" stroke-width=".9"/>
          <path d="M687 246L679 403M672 243C665 281 662 360 656 424M667 257C661 321 660 365 654 432M676 240L668 276" stroke="#2c2f36"/>
          <path d="M671 233C661 270 659 304 657 360 656 390 654 410 652 432M755 241C755 300 752 350 722 441" stroke="#23262e" stroke-width="1.200"/>
          <path d="M724 254L713 333 709 436M720 279L714 344 712 438M727 254L717 340" stroke="#22252d" stroke-width="1.300"/>
          <path d="M750 246Q753 287 747 334L724 438M745 282Q745 341 717 440M736 343l-11 51M742 339l-19 55-9-2 5-44zM720 354l18-5M718 368l16-4M716 393l16-8M714 402l15 5M728 392q-14 0-10 9l9-3-11 15 12-3-13 16" stroke="#4f525a"/>
          <path d="M719 354l14-4-2 35-14 6z" fill="#c5c9d8aa" stroke="none"/>
          <g fill="#92959f" stroke="#30333a"><circle cx="713" cy="278" r="3"/><circle cx="730" cy="283" r="3"/><circle cx="717" cy="400" r="3"/><circle cx="721" cy="407" r="4"/></g>
          <path d="M662 397l17 6-8 42-16-10zM664 402l-6 33M673 404l-11 35" fill="#c3c7d8aa"/>
          <path d="M682 402L710 411 706 449 668 437z" fill="url(#steel)"/><path d="M680 409Q695 418 709 416M678 417Q695 425 708 423M676 424Q690 433 706 430M673 432Q691 440 705 438M675 408l-15 38M671 405l-8 37" stroke="#77736f"/>
          <!-- elbow and motor -->
          <path d="M585 455L601 425Q609 419 628 424L651 430 650 466 620 473 590 466z" fill="#c3c5ce"/><path d="M598 444L606 423Q617 419 634 427L629 462 597 456z" fill="url(#cyl)"/><path d="M586 454l61-7M586 460l50-19M585 449l43 13M592 466l7-43M607 422q-13 15-8 34M632 425q-12 14-6 37" stroke="#30333a"/>
          <path d="M625 459Q625 433 642 424L655 426 666 438Q646 441 644 471z" fill="#a6a9b6"/><path d="M631 456Q627 430 651 422M638 464Q629 436 654 428M648 462Q637 440 660 430M624 446l35-12" stroke="#292c33"/>
          <path d="M645 441q12-14 29-5l14 6-3 24-30 4-12-8z" fill="#766a62"/><path d="M661 435q22-6 36 8l3 22-28 9-18-13z" fill="#c2bfbb"/><path d="M649 440l19 20M659 434v29M668 437l-4 27M676 440l-4 29M648 457l35-10M651 463l39-8" stroke="#494642"/>
          <circle cx="687" cy="454" r="9" fill="#eeeceb"/><circle cx="687" cy="454" r="5" fill="#c1c1c3"/><circle cx="687" cy="454" r="2"/>
          <path d="M699 444Q711 434 720 440C731 451 730 484 714 503Q689 525 650 540L636 535 651 479 681 483z" fill="#c9ccd1"/>
          <ellipse cx="710" cy="471" rx="14" ry="33" transform="rotate(22 710 471)" fill="#abafbcbb" stroke="#30333a"/><ellipse cx="711" cy="466" rx="8" ry="19" transform="rotate(22 711 466)" fill="#878b9977"/><ellipse cx="713" cy="464" rx="4" ry="12" transform="rotate(22 713 464)"/>
          <path d="M695 499l22-52M699 501l26-49M693 476l25-30M687 473h33M673 472l47 5M667 480l48 10M674 506q25-6 43-23M668 519q29-9 47-24M681 467l15 33M662 473l40 10M646 468l50-19M652 447l42 31M659 473q24 8 45-28" stroke="#646771"/>
          <circle cx="695" cy="498" r="3.500" fill="#858994" stroke="#20232b"/>
          <!-- forearm -->
          <path d="M621 473Q632 460 651 464 679 474 680 501 679 529 654 542L607 564 543 598 522 560 528 536 575 501z" fill="#bbbdc6"/>
          <path d="M620 474Q636 466 656 477 671 493 670 518 668 533 651 541L607 562 602 500z" fill="#c9ccd4"/>
          <path d="M625 467Q681 459 675 517 671 533 657 541M632 462Q688 463 679 519M620 472Q668 467 668 517 665 534 651 542" stroke="#555862" stroke-width="2.400"/><path d="M628 465Q681 464 676 520M639 464Q674 472 673 509 672 526 664 535" stroke="#d9dae3" stroke-width="1.300"/>
          <path d="M608 485l14-16 22 5-9 34-20 12-14-9z" fill="#b6b9cc"/><path d="M631 519l19-17 17 13-31 31-19-10z" fill="#9a9eac"/><path d="M649 525l15-8-14 23-12 4z" fill="#70727b"/>
          <path d="M529 542l35-28 38-19 16 18-4 20-54 23-16 17-18-10z" fill="#93939b"/>
          <path d="M537 536l42-18 21 6-5 15-47 20-13-8z" fill="#807e86"/><path d="M580 510l19-12 7 8-18 15-10 5z" fill="#c7cbd7"/><path d="M571 523l12-6 6 8-14 10z" fill="#707076"/><path d="M589 541l28-9-6 16-32 15z" fill="#aaa9ad"/>
          <path d="M545 528l11-7 7 6-10 8zM566 535l14-6 6 8-13 7zM598 516l8-6 8 8-9 7zM548 546l10-4 3 7-9 4zM603 541l12-5-2 7-11 5zM626 490l10-4 4 11-11 5z" fill="#d0d3df" stroke="#3c3e46"/>
          <path d="M554 571L605 545 648 540 607 564z" fill="#e1e4e5" stroke="none"/>
          <path d="M529 536Q577 492 621 473M525 546L617 486M541 567Q590 543 615 539M540 590L611 548M586 495l14 35M600 488l8 52M622 472l-22 67M581 519l67-42M637 468l-48 75M590 504l77 21M609 482l54 48M617 476l48 22M603 511l50-39M612 515l52-14M644 466l11 70M656 475l-43 80M668 490l-55 49M602 533l61-10M613 545l43-42M622 549l41-33M595 491l10 20 19 3-9 15M607 485l13 25M634 483l13 8-8 11 14 9M640 480l-15 8M650 483q14 10 10 34M643 486q12 11 7 34M608 496l21 5M591 497l10 9" stroke="#41444d" stroke-width=".7"/>
          <path d="M538 540l8-11 22-9 12 6 8-6 12 4 11-6 5 11-17 6 3 8-16-2-9 9-11-3-5 9-14-4-3 10-8-12zM546 536l8 17M557 531l9 20M568 524l11 22M579 516l15 25M590 510l12 25M544 549l60-28M551 555l57-22M572 536l23 15M565 511l14 15M579 502l22 23" stroke="#33343b" stroke-width=".8"/>
          <path d="M558 552l22-11-4 6-20 10zM561 570l43-17M563 575l40-17M568 545l29-11M590 551l19-9M557 559l-4 20 13-8" fill="#c9cbd6" stroke="#26282f"/>
          <circle cx="622" cy="523" r="4" fill="#e5e6f0" stroke="#262932"/><circle cx="587" cy="504" r="4"/><circle cx="593" cy="509" r="3"/>
          <!-- wrist -->
          <path d="M511 548l14-9 15 9 11 20-10 14-21-4-14-15z" fill="#c2c6d1" stroke="#202329"/>
          <path d="M527 537l7-6 12 6 5 12-9 10-13-8z" fill="#a9abb4"/><path d="M529 545l18 7M537 533l-6 18M546 537l-10 17M524 551l13 17 5 10M529 560l-8 8"/>
          <g fill="#717681" stroke="#17191f"><circle cx="517" cy="550" r="6"/><circle cx="518" cy="562" r="6" fill="#adb1bb"/><circle cx="541" cy="566" r="5"/><circle cx="540" cy="549" r="4" fill="#aaa"/></g><g fill="#c8ccd5" stroke="#17191f"><circle cx="517" cy="550" r="2.500"/><circle cx="518" cy="562" r="3"/><circle cx="541" cy="566" r="2"/><circle cx="546" cy="574" r="2"/></g>
          <path d="M520 572q14-4 26 5l-4 5-22-4z" fill="#c4d0da"/>
          <!-- palm, thumb and fingers -->
          <path d="M508 602l10-21 17-3 15 14-7 13-17 4z" fill="#cfd3e1"/><path d="M512 606q18 1 31-4M524 579q-5 14 7 28M532 580q-4 13 5 23M519 590l29 4" stroke="#4e535f"/>
          <path d="M531 587l11-7 13 12 8 5 7 26-8-1-11-16-6-6-10-6z" fill="#575962" stroke="#1f2127"/><path d="M551 592l-5 8M555 597l6-3M553 606l9-4M565 607l-5 5" stroke="#d5d7de" stroke-width="1.200"/><path d="M557 606l7-6 6 22-6-1z" fill="#7b7e87"/>
          <path d="M524 573L538 577 527 596 510 622 488 644 478 660 467 657 475 624 493 598z" fill="#585a5e" stroke="#1a1c20"/>
          <path d="M501 561L524 570 516 585 492 576z" fill="#8d8e88" stroke="#202124"/><path d="M490 576L514 586 500 602 477 590z" fill="#878882" stroke="#202124"/><path d="M492 574l24 11M488 578l23 11" stroke="#111217" stroke-width="1.800"/><path d="M498 578l7 3" stroke="#eee" stroke-width="2"/>
          <path d="M529 577l-21 27-11 10M521 590l-19 27M508 603l-24 43M499 606l-15 34" stroke="#111318" stroke-width="2"/><path d="M526 582l-16 22M497 616l-13 23M515 592l-8 13M491 606l-9 20" stroke="#d4d6de" stroke-width="1.200"/>
          <g fill="#606268" stroke="#15171c" stroke-width="1"><circle cx="503" cy="624" r="6"/><circle cx="488" cy="638" r="6"/><circle cx="471" cy="655" r="5"/></g><g fill="#999" stroke="#1b1d23"><circle cx="503" cy="624" r="2"/><circle cx="488" cy="638" r="2"/></g>
          <path d="M480 593l14 7-6 18-6 12-11 9-6 12-16 11-6 17-8 9-4 14-7 1-4-5 2-19 5-11 3-17 8-9 6-4 4-11 10-6 6-9 9-4z" fill="#cdd1e3" stroke="#2b2e37"/>
          <path d="M474 600l17 5-7 14-17-5zM461 614l14 6-8 14-14-7zM448 622l14 5-6 15-13-6zM437 635l13 5-5 16-13-3zM427 654l13 5-4 17-14-3zM421 672l14 5-5 17-9 8-5-6zM453 650l11-3 6-11-11-3z" fill="#e0e3ef" stroke="#262a33"/>
          <path d="M483 597l4 7 5-2M479 599l8 15-5-1M468 611l12 12M472 613l7 14-9-3M459 617l12 19M451 622l12 11-3 7M447 637l15-9M446 632l8 10M437 638l10 7-4 9M436 651l9-4M430 655l9 9M425 660l11 15M421 674l11 4-3 10M425 681l8-3M416 685l10 5-4 11M438 672l5-7M451 650l9-4M463 642l9-5M466 628l9 2M456 635l-7 10" stroke="#22252c" stroke-width="1.300"/>
          <path d="M480 612l9 2M477 622l8 3M469 633l8 3-3 5M461 641l6 4M450 654l6 3M441 664l7 2M437 671l6 2M481 607l-8 1M460 622l-5 8M436 642l-3 8M424 668l-2 11" stroke="#3f424b" stroke-width="1.500"/>
          <path d="M471 620l8 4-5 11M455 642l8-7M435 655l7-5M428 673l5-4" stroke="#858997" stroke-width="1.800"/>
          <g fill="#a0a3ac" stroke="#17191f"><circle cx="485" cy="603" r="2.700"/><circle cx="465" cy="623" r="2.500"/><circle cx="461" cy="634" r="2.500"/><circle cx="443" cy="649" r="2.500"/><circle cx="439" cy="669" r="2.500"/><circle cx="428" cy="667" r="2.500"/><circle cx="422" cy="688" r="2.500"/></g>
        </g>
        <!-- axis triad -->
        <g fill="none" stroke-width="1.500"><path d="M193 685V674" stroke="#252698"/><path d="M191 676l2-5 2 5z" fill="#252698" stroke="none"/><path d="M193 685l10 2" stroke="#217a32"/><path d="M201 684l5 3-5 2z" fill="#217a32" stroke="none"/><path d="M193 685l-5 3" stroke="#942238" stroke-width="2.500"/></g>
        <text class="axis" x="191" y="672">Z</text><text class="axis green" x="205" y="689">Y</text><text class="axis red" x="184" y="691">X</text>
        <g transform="translate(985 392.500)" stroke="#255967" fill="#255967"><path d="M-3 0h6M0-3v6" stroke-width="1.400"/><path d="M0-5l2 3h-4zM0 5l2-3h-4zM-5 0l3-2v4zM5 0l-3-2v4z" stroke="none"/></g>
      </svg>
      <div class="hud"><svg class="ic"><use href="#mag"/></svg><svg class="ic"><use href="#magarea"/></svg><svg class="ic"><use href="#prev"/></svg><svg class="ic faint"><use href="#open"/></svg><svg class="ic"><use href="#section"/></svg><i class="dot dark"></i><svg class="ic"><use href="#cube"/></svg><i class="dot dark"></i><svg class="ic"><use href="#eye"/></svg><i class="dot dark"></i><svg class="ic"><use href="#ghost"/></svg><svg class="ic faint"><use href="#home"/></svg><i class="dot dark"></i><svg class="ic"><use href="#screen"/></svg><i class="dot dark"></i></div>
      <div class="docwin"><button aria-label="Dock left"><svg class="ic"><use href="#dockl"/></svg></button><button aria-label="Dock right"><svg class="ic"><use href="#dockl"/></svg></button><button aria-label="Minimize document"><svg class="ic"><use href="#min"/></svg></button><button aria-label="Restore document"><svg class="ic"><use href="#rest"/></svg></button><button aria-label="Close document"><svg class="ic"><use href="#close"/></svg></button></div>
      <div class="taskpane"><button aria-label="Home"><svg class="ic"><use href="#home"/></svg></button><button aria-label="Design library"><svg class="ic"><use href="#asm"/></svg></button><button aria-label="File explorer"><svg class="ic"><use href="#open"/></svg></button><button aria-label="View palette"><svg class="ic"><use href="#tools"/></svg></button><button aria-label="Appearances"><svg class="ic"><use href="#ball"/></svg></button><button aria-label="Custom properties"><svg class="ic"><use href="#prop"/></svg></button><button aria-label="Forum"><svg class="ic"><use href="#chat"/></svg></button></div>
    </section>
  </main>

  <footer class="status">
    <span class="sel">Lower_Arm_08&lt;1&gt;</span>
    <span class="cell">Under Defined</span><span class="cell">Editing Assembly</span><span class="cell"><svg class="ic"><use href="#light"/></svg></span><span class="cell units">MMGS</span><i class="dot dark"></i><svg class="ic last"><use href="#tag"/></svg>
  </footer>
</div>
</body>
</html>
```
FILE: styles.css
```css
* { box-sizing: border-box; }
body {
  margin: 0;
  height: 100vh;
  padding: 0 48px;
  background: #000;
  color: #222;
  font: 5px/8px "Open Sans", "Noto Sans", sans-serif;
}
button, input { font: inherit; color: inherit; background: none; border: 0; padding: 0; margin: 0; min-width: 0; }
.defs { display: none; }
.ic { width: 9px; height: 9px; flex: none; display: block; }
.dot { width: 2px; height: 2px; border-radius: 1px; background: #999; flex: none; }
.dot.dark { background: #555; }
.faint { opacity: .3; }
.app { display: flex; flex-direction: column; height: 100%; background: #f6f6f6; overflow: hidden; }

.titlebar { display: flex; align-items: center; height: 15px; border-bottom: 1px solid #aaa; flex: none; position: relative; }
.brand { display: flex; align-items: center; gap: 3px; width: 67px; height: 15px; margin-left: 5px; padding-left: 2px; border: 1px solid #ccc; border-top: 0; background: #f0f0f0; color: #c03342; }
.ds { width: 12px; height: 12px; }
.brand-name { font: italic 8px/12px Lato, sans-serif; }
.brand-name b { font-weight: 900; }
.menu { display: flex; justify-content: space-between; width: 131px; margin-left: 13px; color: #111; }
.menu, .doc, .tree, .tabs, .status { -webkit-text-stroke: .2px; }
.pin { margin-left: 11px; }
.quick { display: flex; align-items: center; justify-content: space-between; width: 149px; height: 14px; margin-left: 3px; padding: 0 2px 0 7px; border-left: 1px solid #aaa; color: #aaa; }
.doc { position: absolute; left: 0; right: 0; margin: 0 auto; width: max-content; padding-left: 215px; font: inherit; color: #111; }
.wintools { display: flex; align-items: center; justify-content: space-between; width: 174px; margin-left: auto; padding-right: 2px; color: #333; }
.search { display: flex; align-items: center; gap: 3px; width: 94px; height: 11px; padding: 0 2px; border: 1px solid #777; background: #f4f5f5; color: #555; }
.search input { flex: 1; color: #999; }
.prompt { width: 7px; height: 7px; background: #333; color: #fff; line-height: 7px; text-align: center; }
.help { font-size: 8px; font-weight: 700; }

.toolrow { display: flex; justify-content: space-between; align-items: flex-start; height: 39px; flex: none; }
.ribbon {
  display: grid; height: 39px; width: 607px;
  grid-template-columns: 35px 34px 17px 33px 47px 30px 32px 37px 28px 28px 23px 28px 28px 29px 30px 29px 27px;
  border: solid #aaa; border-width: 0 1px 1px 0; color: #b3b3b3; line-height: 6px;
}
.ribbon button { display: flex; flex-direction: column; align-items: center; justify-content: flex-start; padding-top: 8px; position: relative; text-align: center; white-space: nowrap; }
.ribbon .ic { margin-bottom: 1px; }
.ribbon .line { border-left: 1px solid #ccc; }
.ribbon .drop { padding-top: 5px; }
.ribbon .drop::after { content: ""; position: absolute; bottom: 5px; border: 1px solid transparent; border-top: 2px solid #666; }
.ribbon .on { color: #222; font-weight: 700; background: #fafafa; }
.ribbon .on .ic { width: 11px; }
.filters { display: flex; width: 408px; height: 15px; align-items: center; border: solid #aaa; border-width: 0 0 1px 1px; color: #aaa; }
.filters-a { display: flex; align-items: center; justify-content: space-between; width: 78px; height: 9px; margin-left: 2px; padding: 0 4px 0 5px; border: solid #aaa; border-width: 0 1px; }
.filters-b { display: flex; flex: 1; justify-content: space-between; padding: 0 5px 0 2px; }

.work { display: flex; flex: 1; min-height: 0; }
.side { display: flex; flex-direction: column; width: 127px; border-right: 1px solid #999; background: #f7f7f7; position: relative; flex: none; }
.tabs { display: grid; grid-template-columns: 31px 25px 26px 29px; height: 11px; flex: none; }
.tabs button { border: solid #999; border-width: 0 1px 1px 0; background: #ddd; line-height: 10px; text-align: center; }
.tabs .on { background: #fff; border-bottom: 0; font-weight: 700; }
.grip { height: 11px; border-bottom: 1px solid #ccc; flex: none; display: grid; place-items: center; }
.grip::after { content: ""; width: 3px; height: 2px; background: #aaa; }
.panes { display: flex; height: 12px; flex: none; align-items: center; }
.panes button { width: 19px; height: 12px; display: grid; place-items: center; background: #d5d5d5; border-right: 1px solid #bbb; }
.panes .on { background: #fff; }
.panes .ic { width: 10px; height: 10px; }
.more, .chev { width: 4px; height: 4px; border: solid #444; border-width: 1px 1px 0 0; transform: rotate(45deg) scale(.8); margin: 0 5px 0 auto; }
.filter { display: flex; align-items: center; height: 10px; margin: 1px 2px 1px; border: 1px solid #ccc; background: #fdfdfd; color: #246; padding-left: 1px; flex: none; }
.filter input { flex: 1; }
.tree { display: grid; grid-auto-rows: 1fr; height: 204px; margin: 0; padding: 0 0 0 23px; list-style: none; border-bottom: 1px solid #9aa4ba; flex: none; overflow: hidden; }
.tree li { display: flex; align-items: center; margin-left: -12px; gap: 3px; white-space: nowrap; position: relative; }
.tree .root { margin-left: -22px; gap: 2px; }
.tree .exp::before { content: ""; position: absolute; left: -7px; border: 1px solid transparent; border-left: 2px solid #444; }
.tree .off { color: #999; }
.hscroll { display: flex; align-items: center; height: 9px; margin-top: auto; margin-bottom: 1px; flex: none; }
.hscroll .chev { margin: 0 3px; width: 3px; height: 3px; }
.hscroll .left { transform: rotate(225deg) scale(.8); }
.track { flex: 1; height: 6px; }
.thumb { display: block; width: 84%; height: 6px; background: #ccc; }
.collapse { position: absolute; right: -4px; top: 49%; width: 4px; height: 18px; border: 1px solid #aaa; background: #f6f6f6; z-index: 1; }
.view { flex: 1; min-width: 0; position: relative; background: #fff; }
.scene { display: block; width: 100%; height: 100%; }
.axis { font: 5px Lato, sans-serif; fill: #333; }
.axis.green { fill: #484; }
.axis.red { fill: #a33; }
.hud { position: absolute; top: 3px; left: 43%; width: 149px; margin-left: -2px; display: flex; align-items: center; justify-content: space-between; color: #555; }
.docwin { position: absolute; top: 3px; right: 5px; display: flex; gap: 3px; color: #888; }
.taskpane { position: absolute; top: 25px; right: 0; width: 11px; border: 1px solid #999; background: #ddd; color: #345; }
.taskpane button { display: block; width: 9px; height: 11px; padding-top: 1px; border-bottom: 1px solid #aaa; }
.taskpane button:first-child { background: #fff; }

.status { display: flex; align-items: center; height: 9px; border-top: 1px solid #aaa; flex: none; color: #222; }
.sel { margin-right: auto; }
.cell { padding: 0 4px; border-left: 1px solid #ddd; }
.cell:nth-child(2) { border-left: 0; }
.cell .ic { margin: 0 4px; height: 8px; }
.units { padding: 0 8px; color: #aaa; }
.last { margin: 0 1px 0 31px; color: #555; }
```
